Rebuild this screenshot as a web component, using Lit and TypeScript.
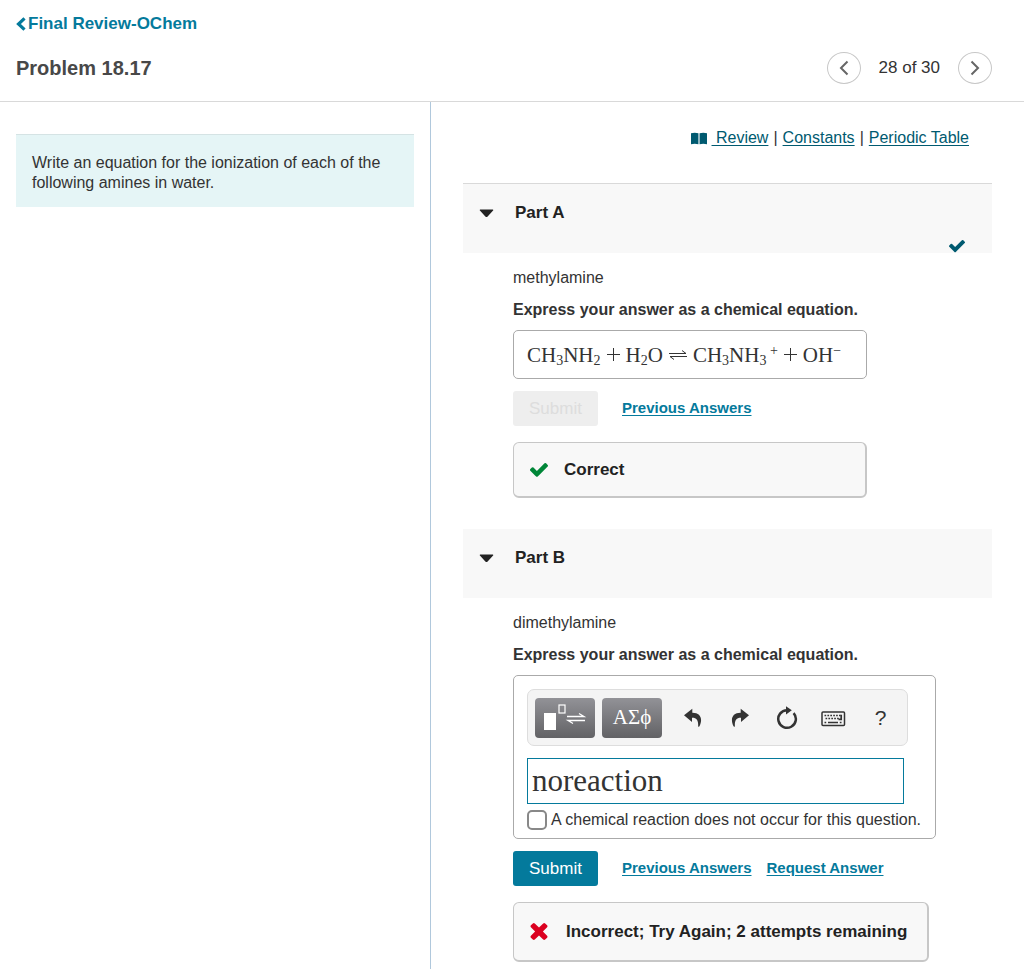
import { LitElement, html, css, svg } from "lit";
import { customElement, property, state } from "lit/decorators.js";

const base = css`
  * {
    box-sizing: border-box;
  }
  :host {
    display: block;
    font-family: "Liberation Sans", Arial, Helvetica, sans-serif;
    font-size: 16px;
    line-height: 20px;
    color: #333;
  }
  svg {
    display: block;
    flex: none;
  }
  button {
    font-family: inherit;
    margin: 0;
    padding: 0;
    cursor: pointer;
  }
  p,
  h1,
  h2 {
    margin: 0;
  }
`;

const checkPath = svg`<path fill="currentColor" d="M1671 566q0 40-28 68l-724 724-136 136q-28 28-68 28t-68-28l-136-136-362-362q-28-28-28-68t28-68l136-136q28-28 68-28t68 28l294 295 656-657q28-28 68-28t68 28l136 136q28 28 28 68z"/>`;
const crossPath = svg`<path fill="currentColor" d="M1490 1322q0 40-28 68l-136 136q-28 28-68 28t-68-28l-294-294-294 294q-28 28-68 28t-68-28l-136-136q-28-28-28-68t28-68l294-294-294-294q-28-28-28-68t28-68l136-136q28-28 68-28t68 28l294 294 294-294q28-28 68-28t68 28l136 136q28 28 28 68t-28 68l-294 294 294 294q28 28 28 68z"/>`;

@customElement("part-section")
class PartSection extends LitElement {
  @property() heading = "";
  @property({ type: Boolean }) done = false;
  @property({ type: Boolean }) ruled = false;
  @state() private open = true;

  static styles = [
    base,
    css`
      .head {
        display: flex;
        justify-content: space-between;
        min-height: 69px;
        padding-right: 27px;
        background: #f8f8f8;
      }
      .ruled {
        min-height: 70px;
        border-top: 1px solid #d9d9d9;
      }
      .toggle {
        display: flex;
        align-items: center;
        gap: 21px;
        height: 58px;
        padding-left: 16px;
        border: 0;
        background: none;
        color: #222;
        font-size: 17px;
        font-weight: bold;
      }
      .mark {
        align-self: flex-end;
        color: #005a70;
      }
      .body {
        padding: 15px 0 0 50px;
      }
    `,
  ];

  render() {
    return html`
      <div class="head ${this.ruled ? "ruled" : ""}">
        <button class="toggle" aria-expanded=${this.open} @click=${() => (this.open = !this.open)}>
          <svg width="15" height="9" viewBox="0 0 15 9" aria-hidden="true">
            <path d="M1.2 .5h12.6q1 .3.3 1L8.4 7.7q-.9.8-1.8 0L.9 1.5q-.7-.7.3-1z" fill="#222" />
          </svg>
          ${this.heading}
        </button>
        ${this.done
          ? html`<svg class="mark" width="16" height="13" viewBox="121 370 1550 1188" role="img" aria-label="Completed">${checkPath}</svg>`
          : ""}
      </div>
      ${this.open ? html`<div class="body"><slot></slot></div>` : ""}
    `;
  }
}

@customElement("chem-equation")
class ChemEquation extends LitElement {
  static styles = [
    base,
    css`
      .equation {
        display: flex;
        align-items: center;
        gap: 6px;
        font-family: "Liberation Serif", "Times New Roman", serif;
        font-size: 21px;
        line-height: 24px;
        white-space: nowrap;
      }
      sub,
      sup {
        font-size: 14px;
        line-height: 0;
      }
      sub {
        vertical-align: -3px;
      }
      sup {
        vertical-align: 7px;
      }
    `,
  ];

  render() {
    const plus = html`<svg width="13" height="13" viewBox="0 0 13 13" role="img" aria-label="plus">
      <path d="M6.5 0v13M0 6.5h13" stroke="#333" stroke-width="1" />
    </svg>`;
    return html`
      <div class="equation">
        <span>CH<sub>3</sub>NH<sub>2</sub></span>
        ${plus}
        <span>H<sub>2</sub>O</span>
        <svg width="18" height="10" viewBox="0 0 18 10" role="img" aria-label="in equilibrium with">
          <path d="M0 3.5H17L13 .5M18 6.5H1L5 9.5" fill="none" stroke="#333" />
        </svg>
        <span>CH<sub>3</sub>NH<sub>3</sub><sup> +</sup></span>
        ${plus}
        <span>OH<sup>−</sup></span>
      </div>
    `;
  }
}

@customElement("answer-editor")
class AnswerEditor extends LitElement {
  static styles = [
    base,
    css`
      .editor {
        width: fit-content;
        max-width: 100%;
        padding: 13px 14px 8px 13px;
        border: 1px solid #aaa;
        border-radius: 5px;
      }
      .toolbar {
        display: flex;
        align-items: center;
        gap: 7px;
        width: 381px;
        max-width: 100%;
        height: 57px;
        padding-left: 7px;
        background: #f4f4f4;
        border: 1px solid #ddd;
        border-radius: 7px;
      }
      .palette {
        display: flex;
        flex: none;
        align-items: center;
        justify-content: center;
        width: 60px;
        height: 40px;
        border: 0;
        border-radius: 4px;
        background: linear-gradient(#929297, #626265);
        color: #fff;
        font-family: "Liberation Serif", serif;
        font-size: 21px;
      }
      .tools {
        display: flex;
        flex: none;
      }
      .tool {
        display: flex;
        align-items: center;
        justify-content: center;
        width: 47px;
        height: 40px;
        border: 0;
        background: none;
        color: #333;
        font-size: 21px;
      }
      .answer {
        display: block;
        width: 377px;
        max-width: 100%;
        height: 46px;
        margin: 12px 0 6px;
        padding: 0 4px;
        border: 1px solid #047a9c;
        outline: 0;
        background: #fff;
        color: #333;
        font-family: "Liberation Serif", "Times New Roman", serif;
        font-size: 31px;
      }
      .none {
        display: flex;
        align-items: center;
        gap: 4px;
      }
      .box {
        appearance: none;
        flex: none;
        width: 20px;
        height: 20px;
        margin: 0;
        border: 2px solid #888;
        border-radius: 5px;
        background: #fff;
      }
      .box:checked {
        background: #047a9c;
      }
    `,
  ];

  render() {
    return html`
      <div class="editor">
        <div class="toolbar" role="toolbar" aria-label="Equation tools">
          <button class="palette" aria-label="Templates">
            <svg width="44" height="30" viewBox="0 0 44 30">
              <rect x="1" y="10" width="12" height="17" fill="#fff" />
              <rect x="16" y="2" width="6" height="8" fill="none" stroke="#fff" stroke-width="1.2" />
              <path d="M24 13.5H41L36 10.5M42 17.5H25L30 20.5" fill="none" stroke="#fff" stroke-width="1.3" />
            </svg>
          </button>
          <button class="palette">ΑΣϕ</button>
          <div class="tools">
            <button class="tool" aria-label="Undo">
              <svg width="18" height="20" viewBox="0 0 18 20">
                <path d="M8.3.8 0 7.3 8 14V9.8c4.7-.2 6.600 2.500 6.100 8.900l1.200-.1C19 11.500 17 4.700 8.300 4.800z" fill="#333" />
              </svg>
            </button>
            <button class="tool" aria-label="Redo">
              <svg width="18" height="20" viewBox="0 0 18 20">
                <path d="M9.700.8 18 7.300 10 14V9.800c-4.700-.2-6.600 2.500-6.100 8.900l-1.200-.1C-1 11.500 1 4.700 9.700 4.800z" fill="#333" />
              </svg>
            </button>
            <button class="tool" aria-label="Reset">
              <svg width="22" height="24" viewBox="0 0 22 24">
                <path d="M17.600 7.100A8.800 8.800 0 1 1 11 4.200" fill="none" stroke="#333" stroke-width="2.500" />
                <path d="M10 .2 15.800 4.200 10 8.600z" fill="#333" />
              </svg>
            </button>
            <button class="tool" aria-label="Keyboard">
              <svg width="25" height="20" viewBox="0 0 25 20">
                <rect x="1" y="4" width="22.500" height="13.500" rx="1" fill="none" stroke="#333" stroke-width="1.500" />
                <path d="M3.500 7.500H21M4.500 10.500H18" fill="none" stroke="#333" stroke-width="1.700" stroke-dasharray="1.700 1.200" />
                <path d="M3.500 14.500H5.200M7 14.500H17M18.800 14.500H20.500M20.200 6.700V11.300H17.500" fill="none" stroke="#333" stroke-width="1.700" />
              </svg>
            </button>
            <button class="tool" aria-label="Help">?</button>
          </div>
        </div>
        <input class="answer" type="text" aria-label="Chemical equation" value="noreaction" />
        <label class="none"><input class="box" type="checkbox" />A chemical reaction does not occur for this question.</label>
      </div>
    `;
  }
}

@customElement("app-root")
class AppRoot extends LitElement {
  static styles = [
    base,
    css`
      :host {
        display: flex;
        flex-direction: column;
        min-height: 100vh;
        background: #fff;
      }
      a {
        color: #047a9c;
      }
      header {
        padding: 14px 32px 17px 16px;
        border-bottom: 1px solid #d9d9d9;
      }
      .crumb {
        display: flex;
        align-items: center;
        gap: 2px;
        width: fit-content;
        font-size: 17px;
        font-weight: bold;
        text-decoration: none;
      }
      .titlebar {
        display: flex;
        align-items: center;
        justify-content: space-between;
        padding-top: 18px;
      }
      h1 {
        font-size: 20px;
        color: #484848;
      }
      .pager {
        display: flex;
        align-items: center;
        gap: 18px;
        font-size: 17px;
      }
      .round {
        display: flex;
        align-items: center;
        justify-content: center;
        width: 34px;
        height: 32px;
        border: 1px solid #c7c7c7;
        border-radius: 50%;
        background: #fff;
      }
      .columns {
        display: grid;
        grid-template-columns: 431fr 593fr;
        flex: 1;
      }
      .left {
        padding: 32px 16px 0;
        border-right: 1px solid #b0c8dc;
      }
      .prompt {
        padding: 18px 16px 14px;
        background: #e5f5f6;
        border-top: 1px solid #d5e3e4;
      }
      .right {
        min-width: 0;
        padding: 26px 32px 0;
      }
      .resources {
        display: flex;
        align-items: center;
        justify-content: flex-end;
        gap: 5px;
        padding: 0 23px 35px 0;
      }
      .resources a {
        color: #005a70;
        text-underline-offset: 2px;
      }
      .review {
        white-space: pre;
      }
      .instruction {
        padding: 12px 0 10px;
        font-weight: bold;
      }
      .given {
        display: flex;
        align-items: center;
        width: 354px;
        max-width: 100%;
        height: 49px;
        padding: 0 13px;
        border: 1px solid #aaa;
        border-radius: 5px;
      }
      .actions {
        display: flex;
        align-items: center;
        gap: 15px;
        padding: 12px 0 16px;
        font-size: 15px;
        font-weight: bold;
      }
      .actions a {
        padding-bottom: 2px;
        text-underline-offset: 2px;
      }
      .submit {
        width: 85px;
        height: 35px;
        margin-right: 9px;
        border: 0;
        border-radius: 3px;
        background: #047a9c;
        color: #fff;
        font-size: 17px;
      }
      .submit:disabled {
        background: #eee;
        color: #ddd;
        cursor: default;
      }
      .result {
        display: flex;
        align-items: center;
        gap: 16px;
        width: 354px;
        max-width: 100%;
        height: 56px;
        padding: 0 16px;
        background: #f8f8f8;
        border: 1px solid #c7c7c7;
        border-right-width: 2px;
        border-bottom-width: 2px;
        border-radius: 6px;
        color: #222;
        font-size: 17px;
        font-weight: bold;
      }
      .wrong {
        gap: 18px;
        width: fit-content;
        height: 60px;
        padding-right: 20px;
      }
      .good {
        color: #008638;
      }
      .bad {
        color: #db0020;
      }
      .first {
        margin-bottom: 31px;
      }
    `,
  ];

  render() {
    return html`
      <header>
        <a class="crumb" href="#review">
          <svg width="10" height="14" viewBox="0 0 10 14" aria-hidden="true">
            <path d="M8.500 1.300 2.500 7l6 5.700" fill="none" stroke="#047a9c" stroke-width="3.200" />
          </svg>
          Final Review-OChem
        </a>
        <div class="titlebar">
          <h1>Problem 18.17</h1>
          <nav class="pager" aria-label="Problems">
            <button class="round" aria-label="Previous problem">
              <svg width="10" height="16" viewBox="0 0 10 16">
                <path d="M8.500 1.500 2 8l6.500 6.500" fill="none" stroke="#666" stroke-width="2" />
              </svg>
            </button>
            <span>28 of 30</span>
            <button class="round" aria-label="Next problem">
              <svg width="10" height="16" viewBox="0 0 10 16">
                <path d="M1.500 1.500 8 8l-6.500 6.500" fill="none" stroke="#666" stroke-width="2" />
              </svg>
            </button>
          </nav>
        </div>
      </header>
      <div class="columns">
        <section class="left">
          <p class="prompt">Write an equation for the ionization of each of the following amines in water.</p>
        </section>
        <main class="right">
          <nav class="resources" aria-label="Resources">
            <svg width="16" height="13" viewBox="0 0 17 13" aria-hidden="true">
              <path d="M0 1Q4 0 7.900 1V12.500Q4 11.500 0 12.500zM9.100 1Q13 0 17 1V12.500Q13 11.500 9.100 12.500z" fill="#005a70" />
            </svg>
            <a class="review" href="#hints"> Review</a><span>|</span><a href="#constants">Constants</a><span>|</span><a href="#table">Periodic Table</a>
          </nav>
          <part-section class="first" heading="Part A" done ruled>
            <p>methylamine</p>
            <p class="instruction">Express your answer as a chemical equation.</p>
            <div class="given"><chem-equation></chem-equation></div>
            <div class="actions">
              <button class="submit" disabled>Submit</button>
              <a href="#answers-a">Previous Answers</a>
            </div>
            <div class="result" role="status">
              <svg class="good" width="18" height="14" viewBox="121 342 1550 1188" aria-hidden="true">${checkPath}</svg>
              Correct
            </div>
          </part-section>
          <part-section heading="Part B">
            <p>dimethylamine</p>
            <p class="instruction">Express your answer as a chemical equation.</p>
            <answer-editor></answer-editor>
            <div class="actions">
              <button class="submit">Submit</button>
              <a href="#answers-b">Previous Answers</a>
              <a href="#request">Request Answer</a>
            </div>
            <div class="result wrong" role="status">
              <svg class="bad" width="18" height="17" viewBox="302 366 1188 1188" aria-hidden="true">${crossPath}</svg>
              Incorrect; Try Again; 2 attempts remaining
            </div>
          </part-section>
        </main>
      </div>
    `;
  }
}
